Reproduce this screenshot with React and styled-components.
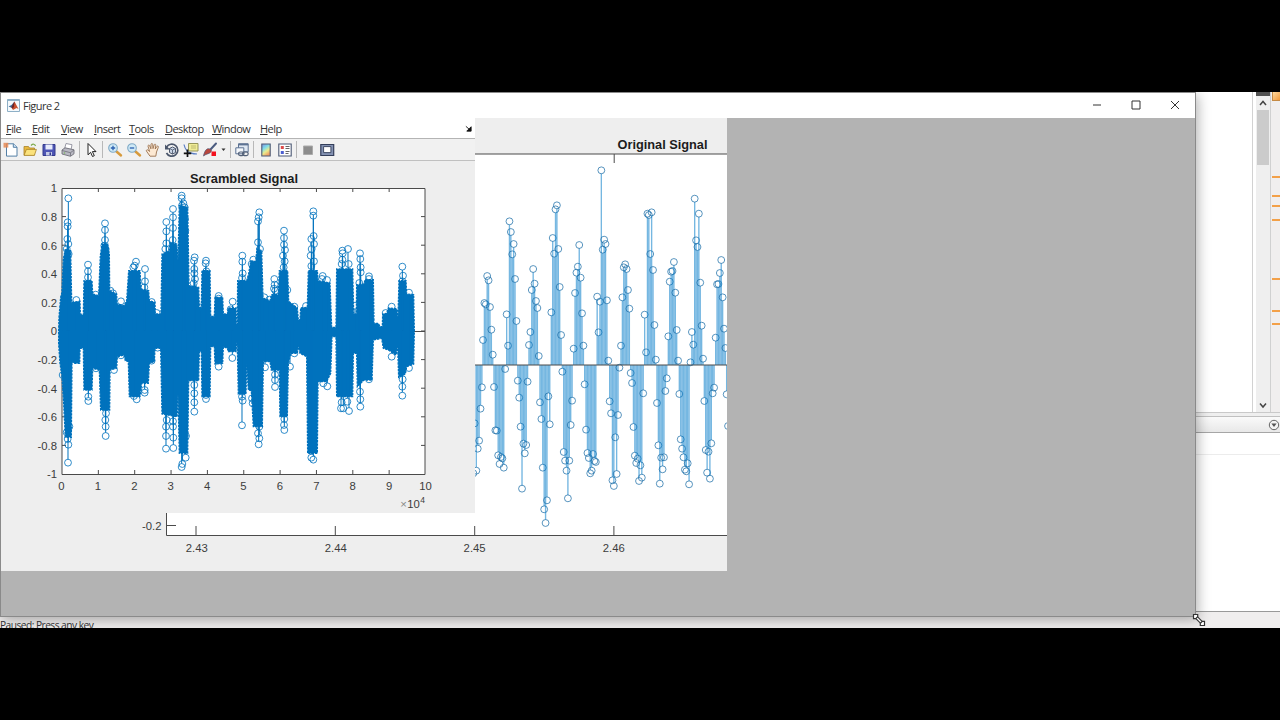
import React from 'react';
import styled, { createGlobalStyle } from 'styled-components';

const BLUE = '#0072bd';

/* ---------- stem data of the original signal ---------- */
// [first x, y of each consecutive sample], in thirds of a pixel from (470, 120)
const STEP = 4.18;
const BASE = 735;
const PEAKS = [
    [39, [660, 549, 553, 468, 481, 561, 629, 704]],
    [110, [583, 677, 304, 336, 403, 372, 477, 603]],
    [177, [675, 636, 510, 447, 491, 543, 564, 708]],
    [244, [577, 354, 401, 268, 256, 387, 501, 645]],
    [311, [686, 519, 458, 440, 375, 473, 580, 677]],
    [381.5, [530, 637, 545, 151, 389, 359, 372, 541, 722]],
    [453, [677, 532, 442, 433, 447, 510, 566]],
    [524, [584, 697, 281, 285, 402, 277, 450, 615, 719]],
    [595, [649, 485, 455, 453, 426, 518, 630, 722]],
    [661.5, [727, 636, 674, 236, 361, 381, 281, 488, 617, 716]],
    [737, [653, 493, 492, 459, 420, 532, 626, 684]],
    [10, [1060]],
    [14, [910]],
    [19, [1052, 986, 962, 866, 802]],
    [72, [801, 931, 932, 1006, 1032, 1011, 1015, 1043, 747]],
    [143.5, [782, 833, 920, 1106, 971, 1000, 975, 785]],
    [210, [847, 897, 1043, 1168, 1209, 1141, 829, 913]],
    [277, [755, 996, 1022, 1052, 1135, 1022, 915, 842]],
    [344, [793, 929, 999, 1014, 1060, 1052, 1002, 1023, 1026]],
    [419, [844, 880, 1081, 1098, 952, 1062, 885, 743]],
    [482, [759, 789, 921, 1007, 1029, 1016, 1083, 1036, 1073, 820]],
    [561, [849, 976, 1091, 1013, 1048, 1012, 813, 775]],
    [628, [822, 958, 986, 1012, 1049, 1054, 1030, 1093]],
    [703, [843, 990, 1058, 995, 1076, 970, 820, 803]],
    [770, [823, 918]],
];

/* ---------- scrambled signal, thirds of a pixel from (40, 164) ---------- */
const ZERO = 501;
const UPPER = [
    57, 460, 62, 400, 66, 385, 70, 285, 76, 255, 92, 260, 95, 415, 120, 412, 121, 450, 130, 453, 132, 350, 156, 350,
    158, 390, 176, 395, 181, 275, 186, 240, 203, 240, 208, 270, 209, 380, 230, 390, 231, 420, 252, 425, 260, 410, 266, 320,
    300, 320, 303, 375, 326, 380, 328, 410, 345, 415, 346, 450, 363, 450, 366, 270, 388, 262, 390, 235,
    410, 240, 414, 290, 418, 125, 443, 130, 447, 365, 476, 370, 478, 430, 484, 430, 486, 320, 510, 320, 512, 457,
    523, 457, 525, 400, 548, 400, 550, 450, 562, 450, 565, 432, 588, 432, 589, 480, 592, 480, 593, 350,
    620, 350, 626, 330, 632, 292, 647, 292, 651, 255, 665, 260, 669, 402, 690, 410, 695, 392, 715, 392,
    718, 320, 743, 320, 746, 412, 772, 432, 775, 468, 780, 468, 782, 432, 802, 430, 805, 320, 832, 320,
    834, 350, 870, 357, 875, 490, 888, 490, 890, 315, 938, 315, 941, 450, 949, 450, 950, 362, 972, 360,
    975, 347, 1000, 347, 1002, 478, 1015, 478, 1020, 488, 1027, 488, 1028, 450, 1040, 448, 1045, 432,
    1070, 434, 1074, 460, 1077, 350, 1098, 350, 1100, 390, 1121, 392,
];
const LOWER = [
    56, 540, 60, 598, 66, 638, 71, 718, 76, 820, 94, 820, 96, 593, 102, 598, 119, 598, 120, 553, 130, 553,
    132, 678, 156, 678, 158, 613, 178, 618, 182, 738, 209, 738, 210, 618, 230, 613, 232, 578, 252, 573,
    256, 590, 265, 593, 268, 698, 300, 698, 305, 658, 325, 658, 328, 598, 343, 593, 345, 553, 362, 553,
    366, 750, 411, 758, 414, 690, 418, 868, 443, 868, 446, 650, 476, 650, 478, 563, 484, 563, 486, 698,
    510, 698, 512, 548, 523, 548, 525, 600, 548, 598, 550, 548, 562, 553, 565, 563, 588, 563, 590, 530,
    592, 550, 595, 690, 618, 690, 620, 600, 625, 678, 634, 680, 640, 788, 667, 788, 670, 593, 690, 593,
    694, 618, 718, 618, 720, 758, 742, 758, 745, 600, 752, 568, 772, 568, 775, 545, 780, 568, 800, 578,
    803, 868, 832, 868, 834, 653, 860, 653, 872, 628, 876, 518, 888, 518, 890, 698, 938, 698, 940, 568,
    950, 568, 952, 668, 972, 648, 996, 648, 1000, 528, 1025, 523, 1030, 553, 1045, 558, 1068, 573,
    1073, 548, 1076, 640, 1096, 630, 1100, 608, 1121, 600,
];
const MARKS = [
    85, 103, 83, 175, 83, 187, 82, 225, 85, 240, 80, 255, 86, 270, 109, 408, 144, 302, 144, 322, 144, 340,
    167, 392, 195, 178, 195, 198, 195, 228, 193, 245, 197, 255, 211, 380, 219, 388, 243, 412, 288, 293,
    280, 310, 284, 305, 315, 315, 315, 352, 313, 370, 335, 414, 350, 447, 379, 174, 379, 202, 379, 238,
    376, 255, 399, 135, 399, 160, 399, 192, 398, 228, 425, 95, 425, 103, 430, 118, 434, 130, 426, 125,
    435, 165, 436, 200, 464, 280, 462, 290, 463, 315, 463, 328, 465, 345, 461, 358, 498, 290, 497, 298,
    499, 322, 536, 396, 536, 404, 578, 413, 572, 436, 480, 430,
    607, 275, 607, 293, 608, 328, 606, 342, 640, 287, 635, 300, 658, 145, 656, 160, 654, 172,
    654, 235, 660, 255, 673, 400, 688, 407, 703, 345, 704, 362, 706, 380, 702, 374, 732, 200, 732, 222,
    732, 242, 735, 258, 729, 275, 734, 292, 731, 310, 742, 378, 763, 428, 798, 426, 820, 142, 820, 155,
    821, 216, 814, 225, 822, 240, 815, 255, 812, 275, 822, 292, 814, 306, 848, 336, 846, 345, 861, 348,
    907, 260, 908, 268, 907, 287, 905, 300, 924, 255, 926, 300, 960, 268, 961, 285, 962, 310, 962, 325,
    958, 357, 987, 337, 987, 345, 945, 425, 1037, 447, 1055, 428, 1087, 308, 1089, 335, 1087, 352, 1107, 386,
    84, 896, 85, 842, 83, 825, 80, 805, 88, 788, 145, 711, 145, 698, 168, 613, 197, 816, 197, 788, 196, 768,
    198, 748, 222, 618, 243, 574, 290, 706, 282, 696, 314, 686, 314, 678, 335, 590, 353, 551, 378, 854,
    378, 816, 378, 788, 380, 768, 400, 852, 400, 821, 399, 788, 399, 772, 425, 909, 427, 900, 437, 881,
    438, 816, 463, 743, 463, 715, 463, 688, 463, 663, 498, 705, 498, 693, 536, 608, 577, 582, 68, 633,
    606, 784, 608, 710, 606, 698, 638, 718, 636, 703, 656, 841, 658, 823, 654, 808, 658, 788,
    675, 610, 705, 669, 705, 648, 705, 632, 707, 612, 733, 798, 732, 783, 732, 743, 733, 765, 750, 608, 763, 568,
    820, 887, 814, 881, 817, 853, 820, 833, 850, 658, 862, 667, 903, 733, 910, 733, 927, 741, 922, 713,
    905, 715, 961, 728, 961, 706, 960, 683, 987, 646, 1055, 578, 1087, 695, 1087, 668, 1088, 646, 1107, 612,
];

const pairs = (flat) => {
    const out = [];
    for (let i = 0; i < flat.length; i += 2) out.push([flat[i], flat[i + 1]]);
    return out;
};

const envelope = 'M56,501 L' + pairs(UPPER).join(' L') + ' L1123,501 L' + pairs(LOWER).reverse().join(' L') + ' Z';

const ticks = [1, 2, 3, 4, 5, 6, 7, 8, 9].map((n) => {
    const x = 62 + n * 36.35;
    const y = 188 + n * 28.6;
    return `M${x} 188v4M${x} 474v-4M62 ${y}h4M425 ${y}h-4`;
}).join('');

const OriginalPlot = () => (
    <Plot width="726" height="453" viewBox="1 118 726 453">
        <rect x="166" y="154" width="561" height="381" fill="#fff" />
        <g transform="translate(470 120) scale(0.33333)">
            {PEAKS.map(([x0, ys], c) => ys.map((y, i) => (
                <g key={`${c}-${i}`}>
                    <line
                        x1={x0 + i * STEP}
                        x2={x0 + i * STEP}
                        y1={BASE}
                        y2={y > BASE ? y - 10 : y + 10}
                        stroke="#0a7fcb"
                        strokeWidth="4.1"
                        opacity="0.56"
                    />
                    <circle cx={x0 + i * STEP} cy={y} r="10.3" fill="none" stroke="#1d6fa8" strokeWidth="2.6" opacity="0.85" />
                </g>
            )))}
        </g>
        <g stroke="#4a4a4a" strokeWidth="1" fill="none">
            <path d="M166.5 154V535.5H727M166.5 154H727" />
            <path d="M475 365H727" />
            <path d="M196 535V526M335.3 535V526M474.7 535V526M613.9 535V526M614.2 154V163M167 525.5H176" />
        </g>
        <g fontSize="11.3" textAnchor="middle">
            <text x="196.8" y="552">2.43</text>
            <text x="335.8" y="552">2.44</text>
            <text x="474.6" y="552">2.45</text>
            <text x="613.8" y="552">2.46</text>
            <text x="161.5" y="530" textAnchor="end">-0.2</text>
        </g>
        <PlotTitle x="617.5" y="149" textLength="90" lengthAdjust="spacingAndGlyphs">Original Signal</PlotTitle>
    </Plot>
);

const ScrambledPlot = () => (
    <Plot width="474" height="352" viewBox="1 161 474 352">
        <rect x="62" y="188" width="363" height="286" fill="#fff" />
        <path d={`M62 188.5H425V474.5H62Z${ticks}M412 331.5H425`} fill="none" stroke="#4a4a4a" />
        <g transform="translate(40 164) scale(0.33333)" fill="none" stroke={BLUE}>
            <path d={envelope} fill={BLUE} strokeWidth="4" strokeDasharray="7 3" />
            {pairs(MARKS).map(([x, y], i) => (
                <g key={i}>
                    <line x1={x} x2={x} y1={y < ZERO ? y + 10 : y - 10} y2={ZERO} strokeWidth="3" />
                    <circle cx={x} cy={y} r="10.3" strokeWidth="2.7" opacity="0.9" />
                </g>
            ))}
        </g>
        <g fontSize="11.3" textAnchor="end">
            {['1', '0.8', '0.6', '0.4', '0.2', '0', '-0.2', '-0.4', '-0.6', '-0.8', '-1'].map((t, i) => (
                <text key={t} x="57" y={192.3 + i * 28.6}>{t}</text>
            ))}
        </g>
        <g fontSize="11.3" textAnchor="middle">
            {[0, 1, 2, 3, 4, 5, 6, 7, 8, 9, 10].map((n) => (
                <text key={n} x={61.5 + n * 36.4} y="490">{n}</text>
            ))}
            <text x="403.5" y="508" fill="#888">×</text>
            <text x="413.5" y="508">10</text>
            <text x="422.5" y="502.5" fontSize="8.5">4</text>
        </g>
        <PlotTitle x="190" y="183" textLength="108" lengthAdjust="spacingAndGlyphs">Scrambled Signal</PlotTitle>
    </Plot>
);

const lens = (
    <>
        <path d="M9.5 9.5l4.5 4" stroke="#d79a3c" strokeWidth="2.4" strokeLinecap="round" />
        <circle cx="6" cy="6" r="4.3" fill="#cfe9f6" stroke="#7fa9c6" strokeWidth="1.1" />
    </>
);

const ICONS = {
    newFile: (
        <>
            <path d="M3.5 1.8h7l3.5 3.3v9H3.5z" fill="#fff" stroke="#5580a6" />
            <path d="M10.3 1.8v3.5H14" fill="#cfe4f5" stroke="#5580a6" />
            <path d="M.5.8h4.8v4.8H.5z" fill="#e58a55" opacity="0.85" />
        </>
    ),
    open: (
        <>
            <path d="M2 13V4.5h4.5l1 1.5h5V13z" fill="#e9b93f" stroke="#a8832b" strokeWidth="0.8" />
            <path d="M2 13.4l2.4-6h10l-2 6z" fill="#fbe27c" stroke="#a8832b" strokeWidth="0.8" />
            <path d="M9 3.5c2-2 4-1.5 4.5.5" fill="none" stroke="#7caa4c" strokeWidth="1.2" />
        </>
    ),
    save: (
        <>
            <path d="M2 2.5h12v11H2z" fill="#4d55b5" stroke="#343b8c" />
            <path d="M4.5 2.5h7v5h-7z" fill="#e8ecfb" />
            <path d="M5 10h6v3.5H5z" fill="#c5cbe6" />
            <path d="M8.5 10.5H10V13H8.5z" fill="#343b8c" />
        </>
    ),
    print: (
        <>
            <path d="M4.5 7L6 1.5l6 1.2-1 5z" fill="#fff" stroke="#8e8e9c" strokeWidth="0.9" />
            <path d="M2 8l3-2.2 9 2v4l-3.5 2.5L2 12z" fill="#b9b9c3" stroke="#6f6f78" strokeWidth="0.9" />
            <path d="M2 8.5l8.5 2.2L14 8M10.5 10.7V14" fill="none" stroke="#6f6f78" strokeWidth="0.8" />
            <circle cx="4.5" cy="11" r="0.8" fill="#7bb661" />
        </>
    ),
    pointer: <path d="M5 1.5v11.3l2.6-2.5 1.9 4.2 1.8-.8-1.9-4.1H13z" fill="#fff" stroke="#222" strokeWidth="1" />,
    zoomIn: <>{lens}<path d="M6 3.8v4.4M3.8 6h4.4" stroke="#2a5fb0" strokeWidth="1.3" /></>,
    zoomOut: <>{lens}<path d="M3.8 6h4.4" stroke="#2a5fb0" strokeWidth="1.3" /></>,
    pan: (
        <path
            d="M5 14.2L1.5 9.2c-.6-1.300.8-1.900 1.600-1L4.600 9.500 3 4.200c-.2-1.300 1.300-1.500 1.700-.4l1.200 3L6 2.400c.1-1.200 1.600-1.200 1.700 0l.3 4.200 1.200-3.800c.4-1.100 1.800-.7 1.600.5L10.200 7l1.700-2.500c.7-1 1.900-.2 1.400.9L11.500 10l-.7 4.200z"
            fill="#fde9d3"
            stroke="#99704f"
            strokeWidth="0.9"
        />
    ),
    rotate: (
        <>
            <path d="M2.6 5.2A6 6 0 1 1 2.5 11" fill="none" stroke="#4b566b" strokeWidth="1.7" />
            <path d="M1 2.5v5h5z" fill="#4b566b" />
            <path d="M5.5 6.500l3-1.500 3 1.500v4l-3 1.600-3-1.600z" fill="#c9d5e6" stroke="#4b566b" strokeWidth="1" />
            <path d="M5.5 6.500l3 1.500 3-1.500M8.500 8v4" fill="none" stroke="#4b566b" strokeWidth="0.8" />
        </>
    ),
    dataCursor: (
        <>
            <path d="M1 2.5c1 5 3 9 13 9.500" fill="none" stroke="#5a7ec4" strokeWidth="1.2" />
            <path d="M5.5 1.500h9.500v7.500H5.500z" fill="#efec96" stroke="#96965a" />
            <path d="M8 4h5M8 6h5" stroke="#b2af67" strokeWidth="0.8" />
            <path d="M4.5 7.500v7.500M.8 11.300h7.500" stroke="#111" strokeWidth="1.7" />
        </>
    ),
    brush: (
        <>
            <path d="M14 1.5L8 8" stroke="#4b5c80" strokeWidth="2" strokeLinecap="round" />
            <path d="M8.5 7.200c1.200.8 1.200 2 .2 3C7 12.200 4.500 11.500 1.500 14c.5-3 2-6.500 4-7.200 1-.4 2 0 3 .4z" fill="#b9463d" stroke="#555b78" strokeWidth="0.7" />
            <path d="M9.500 9.500h4.500V14H9.500z" fill="#f3121f" />
        </>
    ),
    link: (
        <>
            <path d="M4.5 1.8h9.700v8H4.500z" fill="#dfe8f3" stroke="#5d7393" />
            <path d="M4.5 2.500h9.700" stroke="#5d7393" strokeWidth="1.8" />
            <path d="M1.8 5.800h8v6h-8z" fill="#f4f7fb" stroke="#5d7393" />
            <rect x="4.5" y="10" width="5.5" height="3.6" rx="1.8" fill="none" stroke="#526077" strokeWidth="1.2" />
            <rect x="8.5" y="10" width="5.7" height="3.6" rx="1.8" fill="none" stroke="#526077" strokeWidth="1.2" />
        </>
    ),
    colorbar: (
        <>
            <defs>
                <linearGradient id="bar" x1="0" y1="0" x2="0.5" y2="1">
                    <stop offset="0" stopColor="#7f8fe0" />
                    <stop offset="0.4" stopColor="#7edcea" />
                    <stop offset="0.7" stopColor="#e9ec8c" />
                    <stop offset="1" stopColor="#f0a066" />
                </linearGradient>
            </defs>
            <path d="M3.8 2h8.400v12H3.800z" fill="url(#bar)" stroke="#4c5a76" strokeWidth="1.1" />
        </>
    ),
    legend: (
        <>
            <path d="M1.8 2h12.400v12H1.800z" fill="#fff" stroke="#4c5a76" strokeWidth="1.1" />
            <path d="M3.8 4h3v3h-3z" fill="#dc4b4b" />
            <path d="M3.8 9h3v3h-3z" fill="#4b5ed0" />
            <path d="M8.5 4.500h4M8.500 6.500h4M8.500 9.500h4M8.500 11.500h3" stroke="#555" strokeWidth="0.9" />
        </>
    ),
    hide: <path d="M3.5 4h9v8.500h-9z" fill="#8c8c8c" stroke="#aaa" />,
    dock: (
        <>
            <path d="M1.8 2.5h12.900v11H1.800z" fill="#8391b2" stroke="#333e5a" strokeWidth="1.2" />
            <path d="M4.6 4.600h7.300v6H4.600z" fill="#fff" stroke="#333e5a" strokeWidth="0.9" />
        </>
    ),
};

const TOOLS = [
    'newFile', 'open', 'save', 'print', '|', 'pointer', '|', 'zoomIn', 'zoomOut', 'pan', 'rotate',
    'dataCursor', 'brush', 'v', '|', 'link', '|', 'colorbar', 'legend', '|', 'hide', 'dock',
];

const MENUS = [
    ['File', 26], ['Edit', 29], ['View', 33], ['Insert', 35],
    ['Tools', 36], ['Desktop', 47], ['Window', 48], ['Help', 40],
];

const App = () => (
    <Screen>
        <GlobalStyle />
        <Desktop>
            <EditorRow>
                <Editor />
                <ScrollBar>
                    <ScrollCap />
                    <Arrow viewBox="0 0 10 10"><path d="M2 7l3-3.5L8 7" /></Arrow>
                    <Thumb />
                    <Spacer />
                    <Arrow viewBox="0 0 10 10"><path d="M2 3.5L5 7l3-3.5" /></Arrow>
                </ScrollBar>
                <MessageStrip>
                    <Summary />
                    {[75, 17, 8, 12, 57, 30, 11].map((gap, i) => <Message key={i} $gap={gap} />)}
                </MessageStrip>
            </EditorRow>
            <PanelHeader>
                <svg width="12" height="12" viewBox="0 0 12 12">
                    <circle cx="6" cy="6" r="4.7" fill="#f5f5f5" stroke="#666" />
                    <path d="M3.4 4.5h5.200L6 8z" fill="#555" />
                </svg>
            </PanelHeader>
            <CommandTop />
            <CommandWindow />
            <Status>Paused: Press any key</Status>

            <FigureWindow>
                <TitleBar>
                    <svg width="13" height="13" viewBox="0 0 13 13">
                        <path d="M.5.500h12v12H.5z" fill="#f5f9fc" stroke="#8eb0c7" />
                        <path d="M.5 1.200h12" stroke="#8eb0c7" strokeWidth="1.5" />
                        <path d="M1.5 7.500L4.500 6l3-3.500L6 10l-2-1.500z" fill="#3c6d9c" />
                        <path d="M7.5 2.500L11.500 10l-2-1L6 11 4.500 8.500z" fill="#c9502e" />
                        <path d="M7.5 2.500L7 8l-1.500 1.500L4.500 8z" fill="#6d2226" />
                    </svg>
                    <Title>Figure 2</Title>
                    <Controls>
                        <svg viewBox="0 0 12 12"><path d="M2 6h8" /></svg>
                        <svg viewBox="0 0 12 12"><path d="M2 2h8v8H2z" /></svg>
                        <svg viewBox="0 0 12 12"><path d="M2 2l8 8M10 2l-8 8" /></svg>
                    </Controls>
                </TitleBar>
                <Canvas>
                    <OriginalPlot />
                    <FrontFigure>
                        <MenuBar>
                            {MENUS.map(([name, width]) => (
                                <MenuItem key={name} $width={width}><u>{name[0]}</u>{name.slice(1)}</MenuItem>
                            ))}
                            <DockArrow viewBox="0 0 8 8"><path d="M1 1.5l4 3.500M7 2v5H2z" /></DockArrow>
                        </MenuBar>
                        <ToolBar>
                            {TOOLS.map((tool, i) => {
                                if (tool === '|') return <Divider key={i} />;
                                if (tool === 'v') return <Caret key={i} viewBox="0 0 9 9"><path d="M2.5 3.500h4l-2 2.500z" /></Caret>;
                                return <Tool key={i}><svg width="16" height="16" viewBox="0 0 16 16">{ICONS[tool]}</svg></Tool>;
                            })}
                        </ToolBar>
                        <ScrambledPlot />
                    </FrontFigure>
                </Canvas>
            </FigureWindow>
            <ResizeCursor viewBox="0 0 14 14">
                <path d="M3 3l8 8" stroke="#333" strokeWidth="3.5" />
                <path d="M3 3l8 8" stroke="#fff" strokeWidth="1.3" />
                <path d="M1.5 1.500h4.200v2.200l-2 2H1.500zM12.500 12.500H8.300v-2.200l2-2h2.200z" fill="#fff" stroke="#333" strokeWidth="1.2" />
            </ResizeCursor>
        </Desktop>
    </Screen>
);

const GlobalStyle = createGlobalStyle`
    body {
        margin: 0;
        background: #000;
        overflow: hidden;
    }
`;

const Screen = styled.div`
    box-sizing: border-box;
    width: 1280px;
    height: 720px;
    padding: 92px 0;
    background: #000;
    font-family: 'Open Sans', 'Noto Sans', sans-serif;
`;

const Desktop = styled.div`
    position: relative;
    display: flex;
    flex-direction: column;
    height: 536px;
    overflow: hidden;
    background: #fff;
`;

const EditorRow = styled.div`
    display: flex;
    flex-shrink: 0;
    height: 320px;
    border-bottom: 1px solid #c9c9c9;
`;

const Editor = styled.div`
    width: 1252px;
    border-right: 1px solid #d2d2d2;
`;

const ScrollBar = styled.div`
    display: flex;
    flex-direction: column;
    align-items: center;
    width: 14px;
    margin-left: 3px;
    background: #efefef;
`;

const ScrollCap = styled.div`
    align-self: stretch;
    height: 4px;
    background: #505050;
`;

const Arrow = styled.svg`
    width: 10px;
    height: 10px;
    margin: 2px 0;
    fill: none;
    stroke: #444;
    stroke-width: 1.5;
`;

const Thumb = styled.div`
    width: 12px;
    height: 55px;
    background: #cbcbcb;
`;

const Spacer = styled.div`
    flex: 1;
`;

const MessageStrip = styled.div`
    flex: 1;
    padding-left: 1px;
    border-left: 1px solid #d0d0d0;
    background: #f0eeee;
`;

const Summary = styled.div`
    box-sizing: border-box;
    height: 9px;
    border: 1px solid #c58a45;
    border-width: 0 0 1px 1px;
    background: linear-gradient(135deg, #ffd9a0, #f29a3c);
`;

const Message = styled.div`
    height: 2px;
    margin-top: ${(props) => props.$gap}px;
    background: #f3a048;
`;

const PanelHeader = styled.div`
    display: flex;
    flex-shrink: 0;
    align-items: center;
    justify-content: flex-end;
    height: 15px;
    margin-top: 3px;
    border-top: 1px solid #c0c0c0;
    border-bottom: 1px solid #a6a6a6;
    background: linear-gradient(#fafafa, #e8e8e8);
    box-shadow: 0 -3px 0 #efefef;
`;

const CommandTop = styled.div`
    flex-shrink: 0;
    height: 21px;
    border-bottom: 1px solid #ececec;
`;

const CommandWindow = styled.div`
    flex-shrink: 0;
    height: 156px;
    border-bottom: 1px solid #999;
`;

const Status = styled.div`
    flex: 1;
    padding-top: 5px;
    background: #f0eeee;
    color: #333;
    font-size: 10.2px;
    line-height: 16px;
    letter-spacing: -0.53px;
    white-space: nowrap;
`;

const FigureWindow = styled.div`
    position: absolute;
    top: 0;
    left: 0;
    box-sizing: border-box;
    display: flex;
    flex-direction: column;
    width: 1196px;
    height: 525px;
    border: 1px solid #8a8a8a;
    background: #b3b3b3;
    box-shadow: 2px 3px 12px rgba(0, 0, 0, 0.3);
`;

const TitleBar = styled.div`
    box-sizing: border-box;
    display: flex;
    align-items: center;
    height: 25px;
    padding: 0 0 1px 6px;
    background: #fff;
`;

const Title = styled.div`
    flex: 1;
    margin-left: 3px;
    color: #333;
    font-size: 11px;
    letter-spacing: -0.55px;
`;

const Controls = styled.div`
    display: flex;
    gap: 27px;
    margin-right: 14px;

    svg {
        width: 12px;
        height: 12px;
        fill: none;
        stroke: #333;
    }
`;

const Canvas = styled.div`
    position: relative;
    flex: 1;
`;

const Plot = styled.svg`
    display: block;
    background: #eee;
    fill: #3c3c3c;
    font-family: 'Liberation Sans', Arial, sans-serif;
`;

const PlotTitle = styled.text`
    fill: #1c1c1c;
    font-size: 12px;
    font-weight: bold;
`;

const FrontFigure = styled.div`
    position: absolute;
    top: 0;
    left: 0;
    width: 474px;
`;

const MenuBar = styled.div`
    display: flex;
    align-items: center;
    height: 20px;
    padding-left: 5px;
    background: #fff;
`;

const MenuItem = styled.div`
    width: ${(props) => props.$width}px;
    color: #333;
    font-size: 11px;
    letter-spacing: -0.55px;

    u {
        text-decoration-thickness: 1px;
        text-underline-offset: 1px;
    }
`;

const DockArrow = styled.svg`
    width: 7px;
    height: 7px;
    margin: 0 3px 0 auto;
    fill: #111;
    stroke: #111;
`;

const ToolBar = styled.div`
    box-sizing: border-box;
    display: flex;
    align-items: center;
    height: 23px;
    border-top: 1px solid #b4b4b4;
    border-bottom: 1px solid #c0c0c0;
    background: #f1f1f1;
`;

const Tool = styled.div`
    display: flex;
    justify-content: center;
    width: 19px;
`;

const Divider = styled.div`
    width: 1px;
    height: 17px;
    margin: 0 1.75px;
    background: #b8b8b8;
`;

const Caret = styled.svg`
    width: 9px;
    height: 9px;
    fill: #333;
`;

const ResizeCursor = styled.svg`
    position: absolute;
    top: 521px;
    left: 1192px;
    width: 14px;
    height: 14px;
    fill: none;
`;

export default App;
